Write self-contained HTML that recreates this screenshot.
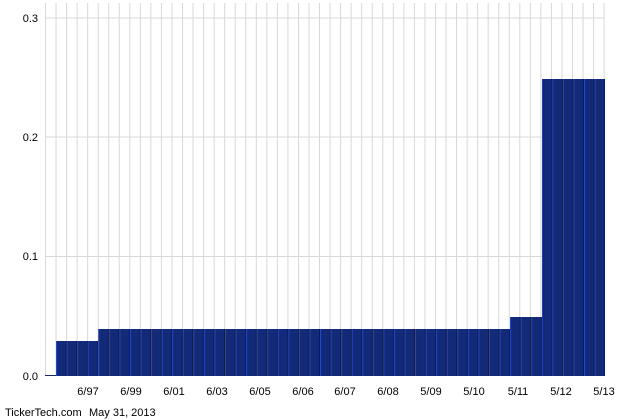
<!DOCTYPE html>
<html><head><style>
html,body{margin:0;padding:0;background:#fff;}
svg{display:block;font-family:"Liberation Sans",Arial,sans-serif;}
</style></head><body>
<svg width="640" height="420" viewBox="0 0 640 420" xmlns="http://www.w3.org/2000/svg">
<defs>
<pattern id="grid" x="45" y="0" width="10.54" height="420" patternUnits="userSpaceOnUse">
<rect x="0" y="0" width="1" height="420" fill="#d8d8d8"/>
</pattern>
<pattern id="bars" x="56" y="0" width="10.56" height="420" patternUnits="userSpaceOnUse">
<rect x="0" y="0" width="10.56" height="420" fill="#132a78"/>
<rect x="0" y="0" width="1" height="420" fill="#2b48b8"/>
<rect x="9.6" y="0" width="1" height="420" fill="#0b1a50"/>
</pattern>
</defs>
<rect x="45" y="3" width="560" height="373" fill="url(#grid)"/>
<line x1="45" y1="18" x2="605" y2="18" stroke="#d8d8d8"/>
<line x1="45" y1="137" x2="605" y2="137" stroke="#d8d8d8"/>
<line x1="45" y1="256.5" x2="605" y2="256.5" stroke="#d8d8d8"/>
<line x1="45" y1="375.5" x2="56" y2="375.5" stroke="#132a78"/>
<rect x="56" y="341" width="42.2" height="35" fill="url(#bars)"/>
<rect x="98.2" y="329" width="411.8" height="47" fill="url(#bars)"/>
<rect x="510" y="317" width="32" height="59" fill="url(#bars)"/>
<rect x="542" y="79" width="63" height="297" fill="url(#bars)"/>
<g font-size="11" fill="#000" text-anchor="end">
<text x="38" y="22">0.3</text>
<text x="38" y="141">0.2</text>
<text x="38" y="260">0.1</text>
<text x="38" y="380">0.0</text>
</g>
<g font-size="11" fill="#000" text-anchor="middle">
<text x="88" y="395">6/97</text>
<text x="131" y="395">6/99</text>
<text x="174" y="395">6/01</text>
<text x="217" y="395">6/03</text>
<text x="260" y="395">6/05</text>
<text x="303" y="395">6/06</text>
<text x="345" y="395">6/07</text>
<text x="388" y="395">6/08</text>
<text x="431" y="395">5/09</text>
<text x="474" y="395">5/10</text>
<text x="518" y="395">5/11</text>
<text x="561" y="395">5/12</text>
<text x="604" y="395">5/13</text>
</g>
<text x="5" y="416" font-size="11" fill="#000">TickerTech.com</text>
<text x="89" y="416" font-size="11" fill="#000">May 31, 2013</text>
</svg>
</body></html>
